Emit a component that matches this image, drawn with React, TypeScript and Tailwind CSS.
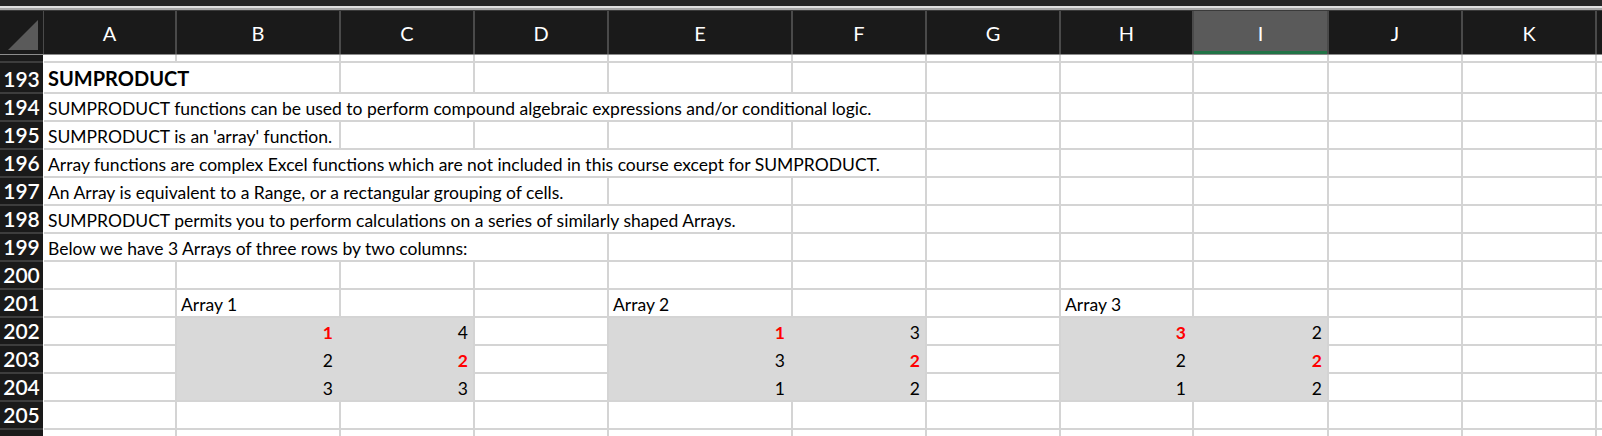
import React from 'react';

const letters = ['A', 'B', 'C', 'D', 'E', 'F', 'G', 'H', 'I', 'J', 'K'];
const gridCols =
  'grid-cols-[131px_162px_132px_132px_182px_132px_132px_131px_133px_132px_132px_1fr]';

const spans: Record<number, string> = {
  1: 'col-span-1',
  2: 'col-span-2',
  3: 'col-span-3',
  4: 'col-span-4',
  5: 'col-span-5',
  6: 'col-span-6',
};

// text cell; long text spills over neighbours like in Excel, so it spans them
const Cell = ({ span = 1, children, className = '' }: { span?: number; children?: React.ReactNode; className?: string }) => (
  <div className={`${spans[span]} bg-white flex items-end pb-[3px] pl-[4px] whitespace-nowrap overflow-hidden text-black ${className}`}>
    {children}
  </div>
);

const Blank = ({ n }: { n: number }) => (
  <>
    {Array.from({ length: n }).map((_, i) => (
      <div key={i} className="bg-white" />
    ))}
  </>
);

type V = number | string;

// shaded 2x3 block, string values are the bold red ones
const ArrayBlock = ({ cols, rows }: { cols: string; rows: [V, V][] }) => {
  const render = (v: V) =>
    typeof v === 'string' ? <span className="font-bold text-[#ff0000]">{v}</span> : <span>{v}</span>;
  return (
    <div className={`row-span-3 col-span-2 bg-[#d9d9d9] grid ${cols} grid-rows-[26px_26px_26px] gap-[2px]`}>
      {rows.map((r, i) => (
        <React.Fragment key={i}>
          <div className="flex items-end justify-end pr-[6px] pb-[3px]">{render(r[0])}</div>
          <div className="flex items-end justify-end pr-[5px] pb-[3px]">{render(r[1])}</div>
        </React.Fragment>
      ))}
    </div>
  );
};

const App = () => {
  const rowNums = [193, 194, 195, 196, 197, 198, 199, 200, 201, 202, 203, 204, 205];

  return (
    <div className="w-[1602px] h-[436px] overflow-hidden bg-white font-['Lato','Open_Sans',sans-serif] text-[17.5px] leading-none">
      {/* window chrome strip */}
      <div className="h-[6px] bg-[#272727]" />
      <div className="h-[2px] bg-[#e2e2e2]" />
      <div className="h-[2px] bg-[#a8a8a8]" />
      <div className="h-[1px] bg-[#3a3a3a]" />

      {/* column headers */}
      <div className="flex h-[44px] border-b border-[#8c8c8c] bg-[#4a4a4a]">
        <div className="w-[43px] mr-[1px] bg-[#1a1a1a] relative">
          <svg className="absolute left-0 top-0" width="43" height="43" viewBox="0 0 43 43">
            <polygon points="8,39 38,39 38,9" fill="#5a5a5a" />
          </svg>
        </div>
        <div className={`grid ${gridCols} gap-x-[2px] flex-1`}>
          {letters.map((l) => (
            <div
              key={l}
              className={`flex items-center justify-center text-white text-[20px] ${
                l === 'I' ? 'bg-[#5a5a5a] border-b-[3px] border-[#217346] pt-[3px]' : 'bg-[#1a1a1a]'
              }`}
            >
              {l}
            </div>
          ))}
          <div className="bg-[#1a1a1a]" />
        </div>
      </div>

      {/* body */}
      <div className="flex">
        <div className="w-[43px] mr-[1px] bg-[#1a1a1a] flex flex-col text-white text-[21px] font-semibold">
          <div className="h-[8px] border-b-2 border-[#3d3d3d]" />
          {rowNums.map((n) => (
            <div
              key={n}
              className={`${n === 193 ? 'h-[31px]' : 'h-[28px]'} border-b-2 border-[#3d3d3d] flex items-end justify-center pb-[3px]`}
            >
              {n}
            </div>
          ))}
        </div>

        <div className={`grid ${gridCols} grid-rows-[6px_29px_repeat(12,26px)_20px] gap-[2px] flex-1 bg-[#d4d4d4]`}>
          {/* 192 sliver */}
          <Blank n={12} />

          {/* 193 */}
          <Cell span={2} className="font-bold text-[20px] pb-[4px]">SUMPRODUCT</Cell>
          <Blank n={10} />

          {/* 194 */}
          <Cell span={6}>
            SUMPRODUCT functions can be used to perform compound algebraic expressions and/or conditional logic.
          </Cell>
          <Blank n={6} />

          {/* 195 */}
          <Cell span={2}>SUMPRODUCT is an 'array' function.</Cell>
          <Blank n={10} />

          {/* 196 */}
          <Cell span={6}>
            Array functions are complex Excel functions which are not included in this course except for SUMPRODUCT.
          </Cell>
          <Blank n={6} />

          {/* 197 */}
          <Cell span={4}>An Array is equivalent to a Range, or a rectangular grouping of cells.</Cell>
          <Blank n={8} />

          {/* 198 */}
          <Cell span={5}>SUMPRODUCT permits you to perform calculations on a series of similarly shaped Arrays.</Cell>
          <Blank n={7} />

          {/* 199 */}
          <Cell span={4}>Below we have 3 Arrays of three rows by two columns:</Cell>
          <Blank n={8} />

          {/* 200 */}
          <Blank n={12} />

          {/* 201 */}
          <Blank n={1} />
          <Cell>Array 1</Cell>
          <Blank n={2} />
          <Cell>Array 2</Cell>
          <Blank n={2} />
          <Cell>Array 3</Cell>
          <Blank n={4} />

          {/* 202 - 204 */}
          <Blank n={1} />
          <ArrayBlock cols="grid-cols-[162px_132px]" rows={[['1', 4], [2, '2'], [3, 3]]} />
          <Blank n={1} />
          <ArrayBlock cols="grid-cols-[182px_132px]" rows={[['1', 3], [3, '2'], [1, 2]]} />
          <Blank n={1} />
          <ArrayBlock cols="grid-cols-[131px_133px]" rows={[['3', 2], [2, '2'], [1, 2]]} />
          <Blank n={3} />
          {/* rows 203 and 204: only A, D, G, J, K and the tail are free */}
          <Blank n={6} />
          <Blank n={6} />

          {/* 205 */}
          <Blank n={12} />
          {/* 206 sliver */}
          <Blank n={12} />
        </div>
      </div>
    </div>
  );
};

export default App;
